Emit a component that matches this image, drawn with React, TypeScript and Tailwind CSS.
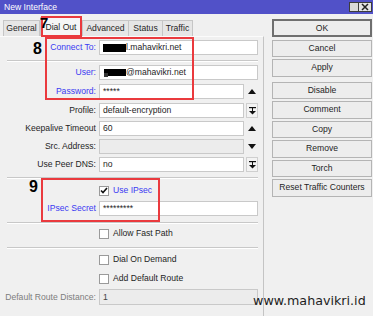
import React from 'react';

type ArrowKind = 'up' | 'down' | 'drop';

const Arrow = ({ kind }: { kind: ArrowKind }) => {
  if (kind === 'drop') {
    return (
      <div className="ml-[2px] w-[12px] h-full border border-[#cfcfcf] bg-[#f3f3f3] flex items-center justify-center">
        <svg width="7" height="8" viewBox="0 0 7 8">
          <rect x="0" y="0" width="7" height="1.2" fill="#111" />
          <rect x="3" y="1" width="1" height="3" fill="#111" />
          <path d="M0 4 L7 4 L3.5 7.5 Z" fill="#111" />
        </svg>
      </div>
    );
  }
  return (
    <div className="ml-[2px] w-[12px] h-full flex items-center justify-center">
      <svg width="8" height="5" viewBox="0 0 8 5">
        {kind === 'up' ? <path d="M0 5 L8 5 L4 0 Z" fill="#111" /> : <path d="M0 0 L8 0 L4 5 Z" fill="#111" />}
      </svg>
    </div>
  );
};

const Row = ({
  label,
  tone = 'normal',
  arrow,
  disabled,
  className = '',
  children,
}: {
  label: string;
  tone?: 'normal' | 'blue' | 'gray';
  arrow?: ArrowKind;
  disabled?: boolean;
  className?: string;
  children?: React.ReactNode;
}) => (
  <div className={`flex items-center h-[15px] ${className}`}>
    <div
      className={`w-[96px] shrink-0 text-right whitespace-nowrap ${
        tone === 'blue' ? 'text-[#3a3af2]' : tone === 'gray' ? 'text-[#7d7d7d]' : 'text-[#1e1e1e]'
      }`}
    >
      {label}
    </div>
    <div
      className={`ml-[3px] h-full flex-1 flex items-center pl-[3px] border border-[#c9c9c9] whitespace-nowrap overflow-hidden ${
        disabled ? 'bg-[#ececec]' : 'bg-white'
      }`}
    >
      {children}
    </div>
    {arrow && <Arrow kind={arrow} />}
  </div>
);

const Check = ({ label, checked, blue, className = '' }: { label: string; checked?: boolean; blue?: boolean; className?: string }) => (
  <div className={`flex items-center h-[15px] pl-[99px] ${className}`}>
    <div className="w-[10px] h-[10px] bg-white border border-[#9a9a9a] flex items-center justify-center">
      {checked && (
        <svg width="8" height="7" viewBox="0 0 8 7">
          <path d="M1 3.5 L3 5.5 L7 1" stroke="#111" strokeWidth="1.6" fill="none" />
        </svg>
      )}
    </div>
    <span className={`ml-[4px] ${blue ? 'text-[#3a3af2]' : 'text-[#1e1e1e]'}`}>{label}</span>
  </div>
);

const Sep = ({ className = '' }: { className?: string }) => (
  <div className={`ml-[7px] h-[2px] border-t border-[#c8c8c8] border-b-white border-b ${className}`} />
);

const buttons = ['Comment', 'Copy', 'Remove', 'Torch', 'Reset Traffic Counters'];

export default function App() {
  return (
    <div className="relative w-[373px] h-[316px] overflow-hidden bg-[#f0f0f0] font-['Liberation_Sans',Arial,sans-serif] text-[8.6px] leading-none text-[#1e1e1e]">
      {/* title bar */}
      <div className="h-[14px] bg-[#5151c8] flex items-center justify-between pl-[4px] pr-[1px]">
        <span className="text-white text-[8.6px]">New Interface</span>
        <div className="flex">
          <div className="w-[10px] h-[10px] bg-[#d9d9d9] border border-[#3c3c3c]" />
          <div className="w-[13px] h-[10px] bg-[#e4e4e4] border border-[#3c3c3c] border-l-0 flex items-center justify-center">
            <svg width="8" height="8" viewBox="0 0 8 8">
              <path d="M1 1 L7 7 M7 1 L1 7" stroke="#222" strokeWidth="1.5" />
            </svg>
          </div>
        </div>
      </div>

      <div className="flex h-[302px]">
        {/* left: tabs + panel */}
        <div className="w-[264px] flex flex-col">
          <div className="h-[22px] flex items-end pl-[3px]">
            <div className="w-[37px] h-[16px] flex items-center justify-center bg-[#e6e6e6] border border-b-0 border-[#c6c6c6]">General</div>
            <div className="w-[42px] h-[19px] flex items-center justify-center bg-[#f6f6f6] border border-b-0 border-[#c6c6c6]">Dial Out</div>
            <div className="w-[47px] h-[16px] flex items-center justify-center bg-[#e6e6e6] border border-b-0 border-[#c6c6c6]">Advanced</div>
            <div className="w-[34px] h-[16px] flex items-center justify-center bg-[#e6e6e6] border border-b-0 border-l-0 border-[#c6c6c6]">Status</div>
            <div className="w-[30px] h-[16px] flex items-center justify-center bg-[#e6e6e6] border border-b-0 border-l-0 border-[#c6c6c6]">Traffic</div>
          </div>

          <div className="flex-1 flex flex-col border-t border-[#fbfbfb] border-r border-r-[#c4c4c4] pr-[5px] pt-[3px]">
            <Row label="Connect To:" tone="blue">
              <span className="inline-block w-[23px] h-[8px] bg-black" />
              <span>l.mahavikri.net</span>
            </Row>
            <Sep className="mt-[5px]" />
            <Row label="User:" tone="blue" className="mt-[3px]">
              <span className="relative inline-block w-[23px] h-[8px]">
                <span className="absolute left-[1px] top-0 w-[22px] h-[5px] bg-black" />
                <span className="absolute left-[1px] top-[4px] w-[4px] h-[4px] bg-[#333]" />
                <span className="absolute left-[5px] top-[4px] w-[18px] h-[3px] bg-black" />
              </span>
              <span>@mahavikri.net</span>
            </Row>
            <Row label="Password:" tone="blue" arrow="up" className="mt-[4px]">*****</Row>
            <Row label="Profile:" arrow="drop" className="mt-[4px]">default-encryption</Row>
            <Row label="Keepalive Timeout" arrow="up" className="mt-[3px]">60</Row>
            <Row label="Src. Address:" arrow="down" disabled className="mt-[3px]" />
            <Row label="Use Peer DNS:" arrow="drop" className="mt-[3px]">no</Row>
            <Sep className="mt-[5px]" />
            <Check label="Use IPsec" checked blue className="mt-[4px]" />
            <Row label="IPsec Secret" tone="blue" className="mt-[3px]">*********</Row>
            <Sep className="mt-[6px]" />
            <Check label="Allow Fast Path" className="mt-[2px]" />
            <Sep className="mt-[6px]" />
            <Check label="Dial On Demand" className="mt-[3px]" />
            <Check label="Add Default Route" className="mt-[4px]" />
            <Row label="Default Route Distance:" tone="gray" disabled className="mt-[3px] h-[16px]">
              <span className="text-[#444]">1</span>
            </Row>
          </div>
        </div>

        {/* right: buttons */}
        <div className="ml-[8px] w-[100px] flex flex-col pt-[5px]">
          <div className="h-[18px] flex items-center justify-center bg-[#ededed] border-2 border-[#6f6f6f]">OK</div>
          <div className="mt-[2.5px] h-[17.5px] flex items-center justify-center bg-[#ededed] border border-[#b4b4b4]">Cancel</div>
          <div className="mt-[2px] h-[17.5px] flex items-center justify-center bg-[#ededed] border border-[#b4b4b4]">Apply</div>
          <div className="mt-[5px] h-[17.5px] flex items-center justify-center bg-[#ededed] border border-[#b4b4b4]">Disable</div>
          {buttons.map((b) => (
            <div key={b} className="mt-[2px] h-[17.5px] flex items-center justify-center bg-[#ededed] border border-[#b4b4b4]">
              {b}
            </div>
          ))}
        </div>
      </div>

      {/* annotations */}
      <div className="absolute left-[41px] top-[16px] w-[41px] h-[21px] border-2 border-[#ea3a3e]" />
      <div className="absolute left-[45px] top-[37px] w-[149px] h-[63px] border-2 border-[#ea3a3e]" />
      <div className="absolute left-[41px] top-[178px] w-[119px] h-[44px] border-2 border-[#ea3a3e]" />
      <div className="absolute left-[40px] top-[15px] text-[15px] leading-[15px] font-bold text-black">7</div>
      <div className="absolute left-[33px] top-[41px] text-[16px] leading-[16px] font-bold text-black">8</div>
      <div className="absolute left-[29px] top-[179px] text-[16px] leading-[16px] font-bold text-black">9</div>
      <div className="absolute left-[253px] top-[294px] font-['DejaVu_Sans',Verdana,sans-serif] text-[12.7px] leading-[13px] text-[#1c1c1c]">
        www.mahavikri.id
      </div>
    </div>
  );
}
